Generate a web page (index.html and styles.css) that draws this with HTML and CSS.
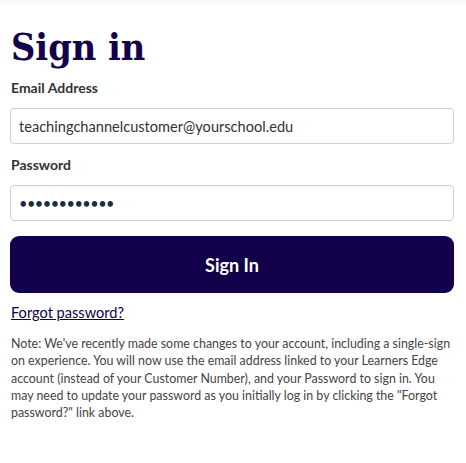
FILE: index.html
```html
<!DOCTYPE html>
<html lang="en">
<head>
<meta charset="utf-8">
<title>Sign in</title>
<link rel="stylesheet" href="styles.css">
</head>
<body>
<div class="topbar"></div>
<main class="signin">
  <h1 class="title">Sign in</h1>
  <form class="form">
    <label class="label" for="email">Email Address</label>
    <input class="field" id="email" type="text" value="teachingchannelcustomer@yourschool.edu">
    <label class="label" for="pw">Password</label>
    <input class="field pw" id="pw" type="password" value="abcdefghijkl">
    <button class="btn" type="button">Sign In</button>
  </form>
  <a class="forgot" href="#">Forgot password?</a>
  <p class="note">Note: We've recently made some changes to your account, including a single-sign on experience. You will now use the email address linked to your Learners Edge account (instead of your Customer Number), and your Password to sign in. You may need to update your password as you initially log in by clicking the "Forgot password?" link above.</p>
</main>
</body>
</html>
```
FILE: styles.css
```css
html, body {
  margin: 0;
  padding: 0;
  background: #fff;
}
body {
  font-family: Lato, "Open Sans", sans-serif;
  color: #333;
}
.topbar {
  height: 5px;
  background: linear-gradient(#f6f6f6, #fff);
}
.signin {
  padding: 0 12px 0 10px;
}
.title {
  margin: 20px 0 0 1px;
  font-family: "DejaVu Serif", serif;
  font-stretch: condensed;
  font-weight: bold;
  font-size: 37.5px;
  line-height: 44px;
  color: #13004a;
}
.form {
  display: flex;
  flex-direction: column;
}
.label {
  margin: 10px 0 0 1px;
  font-size: 14px;
  font-weight: bold;
  line-height: 18px;
  color: #333;
}
.field {
  margin-top: 11px;
  height: 36px;
  box-sizing: border-box;
  border: 1px solid #cfcfcf;
  border-radius: 4px;
  padding: 0 8px;
  font-family: Lato, sans-serif;
  font-size: 14.6px;
  color: #333;
  background: #fff;
}
.field + .label {
  margin-top: 12px;
}
.pw {
  letter-spacing: -0.55px;
  color: #1f2a44;
}
.btn {
  margin-top: 15px;
  height: 57px;
  border: none;
  border-radius: 9px;
  background: #13004a;
  color: #fff;
  font-family: Lato, sans-serif;
  font-size: 18px;
  font-weight: bold;
  cursor: pointer;
}
.forgot {
  display: inline-block;
  margin: 11px 0 0 1px;
  font-size: 14.6px;
  line-height: 18px;
  color: #13004a;
  text-decoration: underline;
}
.note {
  margin: 13px 0 0 1px;
  font-size: 12.4px;
  line-height: 17.3px;
  color: #444;
}
```
